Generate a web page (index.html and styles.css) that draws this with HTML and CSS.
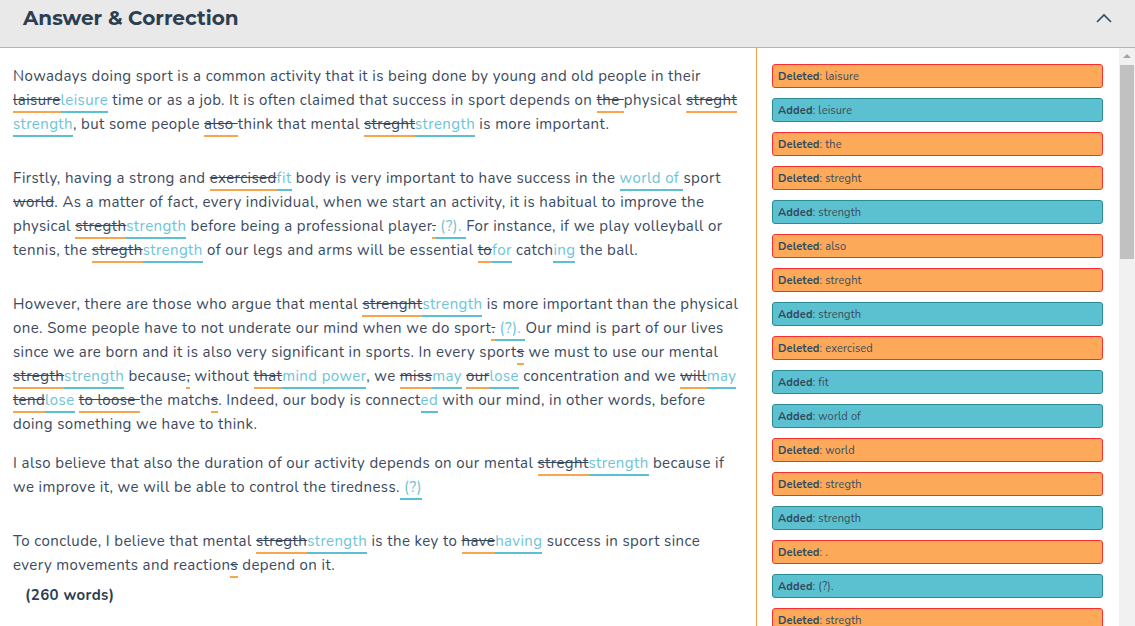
FILE: index.html
```html
<!DOCTYPE html>
<html>
<head>
<meta charset="utf-8">
<link rel="stylesheet" href="styles.css">
</head>
<body>
<div class="page">
  <header class="head">
    <h1 class="title">Answer &amp; Correction</h1>
    <svg class="chev" width="18" height="12" viewBox="0 0 18 12"><polyline points="2,10 9,3 16,10" fill="none" stroke="#34495e" stroke-width="1.6"/></svg>
  </header>
  <div class="main">
    <div class="essay">
      <p class="para gap30">Nowadays doing sport is a common activity that it is being done by young and old people in their<br><span class="del">laisure</span><span class="add">leisure</span> time or as a job. It is often claimed that success in sport depends on <span class="del">the </span>physical <span class="del">streght</span><br><span class="add">strength</span>, but some people <span class="del">also </span>think that mental <span class="del">streght</span><span class="add">strength</span> is more important.</p>
      <p class="para gap30">Firstly, having a strong and <span class="del">exercised</span><span class="add">fit</span> body is very important to have success in the <span class="add">world of </span>sport<br><span class="delx">world</span>. As a matter of fact, every individual, when we start an activity, it is habitual to improve the<br>physical <span class="del">stregth</span><span class="add">strength</span> before being a professional player<span class="del">.</span><span class="add"> (?). </span>For instance, if we play volleyball or<br>tennis, the <span class="del">stregth</span><span class="add">strength</span> of our legs and arms will be essential <span class="del">to</span><span class="add">for</span> catch<span class="add">ing</span> the ball.</p>
      <p class="para gap15">However, there are those who argue that mental <span class="del">strenght</span><span class="add">strength</span> is more important than the physical<br>one. Some people have to not underate our mind when we do sport<span class="del">.</span><span class="add"> (?). </span>Our mind is part of our lives<br>since we are born and it is also very significant in sports. In every sport<span class="del">s</span> we must to use our mental<br><span class="del">stregth</span><span class="add">strength</span> because<span class="del">,</span> without <span class="del">that</span><span class="add">mind power</span>, we <span class="del">miss</span><span class="add">may</span> <span class="del">our</span><span class="add">lose</span> concentration and we <span class="del">will</span><span class="add">may</span><br><span class="del">tend</span><span class="add">lose</span> <span class="del">to loose </span>the match<span class="del">s</span>. Indeed, our body is connect<span class="add">ed</span> with our mind, in other words, before<br>doing something we have to think.</p>
      <p class="para gap30">I also believe that also the duration of our activity depends on our mental <span class="del">streght</span><span class="add">strength</span> because if<br>we improve it, we will be able to control the tiredness.<span class="add"> (?)</span></p>
      <p class="para gap6">To conclude, I believe that mental <span class="del">stregth</span><span class="add">strength</span> is the key to <span class="del">have</span><span class="add">having</span> success in sport since<br>every movements and reaction<span class="del">s</span> depend on it.</p>
      <p class="words">(260 words)</p>
    </div>
    <aside class="side">
      <div class="list">
        <div class="item d"><b>Deleted</b>: laisure</div>
        <div class="item a"><b>Added</b>: leisure</div>
        <div class="item d"><b>Deleted</b>: the</div>
        <div class="item d"><b>Deleted</b>: streght</div>
        <div class="item a"><b>Added</b>: strength</div>
        <div class="item d"><b>Deleted</b>: also</div>
        <div class="item d"><b>Deleted</b>: streght</div>
        <div class="item a"><b>Added</b>: strength</div>
        <div class="item d"><b>Deleted</b>: exercised</div>
        <div class="item a"><b>Added</b>: fit</div>
        <div class="item a"><b>Added</b>: world of</div>
        <div class="item d"><b>Deleted</b>: world</div>
        <div class="item d"><b>Deleted</b>: stregth</div>
        <div class="item a"><b>Added</b>: strength</div>
        <div class="item d"><b>Deleted</b>: .</div>
        <div class="item a"><b>Added</b>: (?).</div>
        <div class="item d"><b>Deleted</b>: stregth</div>
      </div>
      <div class="scroll">
        <div class="arrow"></div>
        <div class="thumb"></div>
      </div>
    </aside>
  </div>
</div>
</body>
</html>
```
FILE: styles.css
```css
html, body { margin: 0; padding: 0; }
body { width: 1135px; height: 626px; overflow: hidden; background: #fff; font-family: "Nunito", Lato, "Liberation Sans", sans-serif; color: #3b4a5e; }
.page { display: flex; flex-direction: column; height: 626px; }
.head { height: 47px; background: #e9e9e9; border-bottom: 1px solid #f9a54e; display: flex; align-items: flex-start; justify-content: space-between; padding: 0 23px; box-sizing: content-box; }
.title { margin: 5px 0 0; font-family: Montserrat, Inter, "Liberation Sans", sans-serif; font-weight: 700; font-size: 20px; line-height: 27px; color: #2c3e50; letter-spacing: 0px; }
.chev { margin-top: 12px; margin-right: -1px; }
.main { flex: 1; display: flex; min-height: 0; }
.essay { width: 743px; padding: 16px 0 0 13px; border-right: 1px solid #f9a54e; font-size: 15px; line-height: 24px; letter-spacing: 0.4px; white-space: nowrap; }
.para { margin: 0; }
.gap30 { margin-bottom: 30px; }
.gap15 { margin-bottom: 15px; }
.gap6 { margin-bottom: 6px; }
.words { margin: 0 0 0 12px; font-weight: 700; font-size: 15px; line-height: 24px; color: #2c3e50; }
.del { text-decoration: line-through; text-decoration-color: #34495e; border-bottom: 2px solid #f9a54e; padding-bottom: 1px; white-space: pre; }
.delx { text-decoration: line-through; }
.add { color: #6ec4d6; border-bottom: 2px solid #5bc0d0; padding-bottom: 1px; white-space: pre; }
.side { flex: 1; display: flex; min-width: 0; }
.list { flex: 1; padding: 16px 16px 0 15px; overflow: hidden; display: flex; flex-direction: column; gap: 10px; }
.item { height: 21px; padding-top: 1px; border-radius: 3px; font-size: 11px; line-height: 21px; padding-left: 5px; color: #3b4a5e; flex: none; letter-spacing: 0.15px; }
.item b { font-weight: 700; color: #34495e; }
.item.d { background: #fca95a; border: 1px solid #fb2f2f; }
.item.a { background: #5bc1d0; border: 1px solid #2a8a96; }
.scroll { width: 16px; background: #f1f1f1; display: flex; flex-direction: column; align-items: center; }
.arrow { margin-top: 6px; width: 0; height: 0; border-left: 4px solid transparent; border-right: 4px solid transparent; border-bottom: 4px solid #a3a3a3; }
.thumb { margin-top: 7px; width: 14px; height: 194px; background: #c1c1c1; }
```
